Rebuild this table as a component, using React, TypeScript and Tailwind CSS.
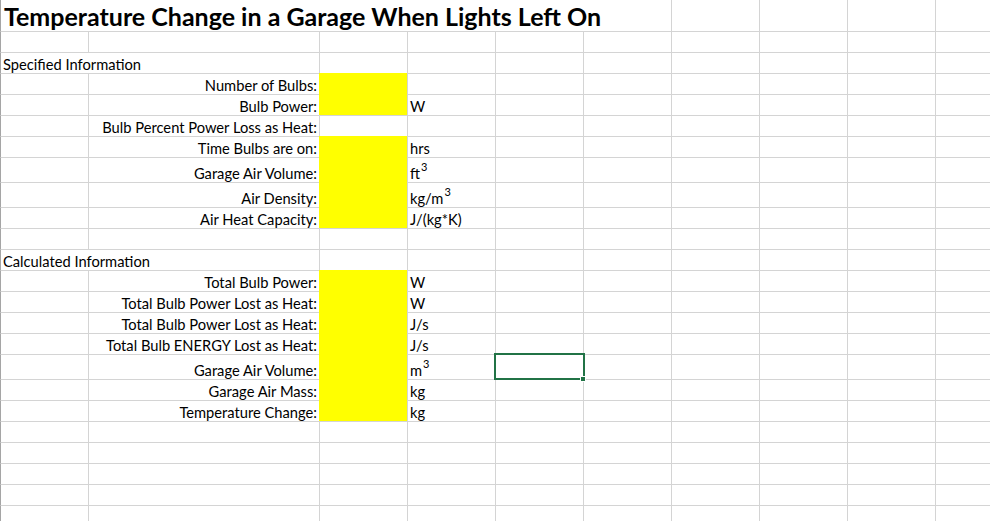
import React from "react";

interface SheetRow {
  label?: string;
  unit?: React.ReactNode;
  yellow?: boolean;
  tall?: boolean;
  section?: string;
  selected?: boolean;
}

const Sup: React.FC<{ children: React.ReactNode }> = ({ children }) => (
  <span className="relative top-[-10px] ml-[1px] text-[11px] leading-none">{children}</span>
);

const rows: SheetRow[] = [
  {},
  { section: "Specified Information" },
  { label: "Number of Bulbs:", yellow: true },
  { label: "Bulb Power:", unit: "W", yellow: true },
  { label: "Bulb Percent Power Loss as Heat:" },
  { label: "Time Bulbs are on:", unit: "hrs", yellow: true },
  {
    label: "Garage Air Volume:",
    unit: (
      <>
        ft<Sup>3</Sup>
      </>
    ),
    yellow: true,
    tall: true,
  },
  {
    label: "Air Density:",
    unit: (
      <>
        kg/m<Sup>3</Sup>
      </>
    ),
    yellow: true,
    tall: true,
  },
  { label: "Air Heat Capacity:", unit: "J/(kg*K)", yellow: true },
  {},
  { section: "Calculated Information" },
  { label: "Total Bulb Power:", unit: "W", yellow: true },
  { label: "Total Bulb Power Lost as Heat:", unit: "W", yellow: true },
  { label: "Total Bulb Power Lost as Heat:", unit: "J/s", yellow: true },
  { label: "Total Bulb ENERGY Lost as Heat:", unit: "J/s", yellow: true },
  {
    label: "Garage Air Volume:",
    unit: (
      <>
        m<Sup>3</Sup>
      </>
    ),
    yellow: true,
    tall: true,
    selected: true,
  },
  { label: "Garage Air Mass:", unit: "kg", yellow: true },
  { label: "Temperature Change:", unit: "kg", yellow: true },
  {},
  {},
  {},
  {},
  {},
];

const GRID = "grid grid-cols-[88px_231px_88px_88px_88px_88px_88px_88px_88px_88px]";
const LINE = "border-t border-l border-[#d4d4d4]";
const FIRST = "border-t border-l border-[#d4d4d4] border-l-[#a5a5a5]";

const SheetRowView: React.FC<{ row: SheetRow }> = ({ row }) => {
  const height = row.tall ? "h-[25px]" : "h-[21px]";
  // columns left after A..D (or after the merged section title in A:B)
  const rest = row.section ? 8 : 6;

  return (
    <div className={`${GRID} ${height}`}>
      {row.section ? (
        <div className={`${FIRST} col-span-2 flex items-end pl-[2px] leading-[17px]`}>
          {row.section}
        </div>
      ) : (
        <>
          <div className={`${FIRST} ${row.selected ? "border-l-[#217346]" : ""}`} />
          <div className={`${LINE} flex items-end justify-end pr-[2px] leading-[17px] whitespace-nowrap`}>
            {row.label}
          </div>
          <div className={row.yellow ? "border-t border-l border-[#ffff00] bg-[#ffff00]" : LINE} />
          <div className={`${LINE} flex items-end pl-[2px] leading-[17px] whitespace-nowrap`}>
            {row.unit}
          </div>
        </>
      )}
      {Array.from({ length: rest }).map((_, i) => (
        <div key={i} className={`${LINE} ${row.selected && i === 0 ? "relative" : ""}`}>
          {row.selected && i === 0 && (
            <>
              <div className="absolute -left-[2px] -top-[2px] h-[27px] w-[91px] border-2 border-[#217346]" />
              <div className="absolute left-[84px] top-[21px] h-[6px] w-[6px] border border-white bg-[#217346]" />
            </>
          )}
        </div>
      ))}
    </div>
  );
};

export default function App() {
  return (
    <div className="h-[521px] w-[990px] overflow-hidden bg-white font-[Lato,sans-serif] text-[14.7px] text-black">
      <div className={`${GRID} h-[31px]`}>
        <div className="col-span-6 flex items-end border-l border-[#a5a5a5] pl-[3px] text-[25px] font-bold leading-[30px] whitespace-nowrap">
          Temperature Change in a Garage When Lights Left On
        </div>
        <div className="border-l border-[#d4d4d4]" />
        <div className="border-l border-[#d4d4d4]" />
        <div className="border-l border-[#d4d4d4]" />
        <div className="border-l border-[#d4d4d4]" />
      </div>
      {rows.map((row, i) => (
        <SheetRowView key={i} row={row} />
      ))}
    </div>
  );
}
